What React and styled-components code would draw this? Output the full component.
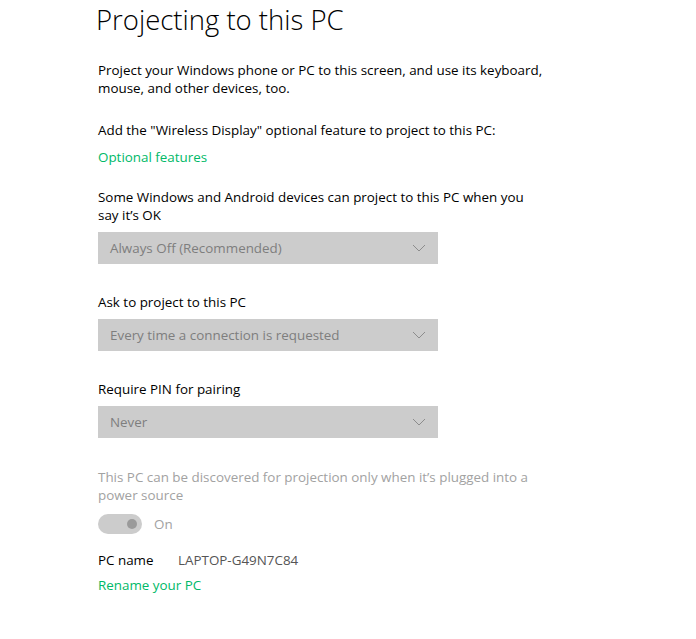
import React from 'react';
import styled, { createGlobalStyle } from 'styled-components';

const GlobalStyle = createGlobalStyle`
  html, body {
    margin: 0;
    padding: 0;
    background: #ffffff;
  }
  body {
    font-family: "Open Sans", "Noto Sans", "Liberation Sans", sans-serif;
    color: #000;
  }
`;

const Page = styled.div`
  width: 696px;
  height: 639px;
  box-sizing: border-box;
  padding-left: 98px;
  display: flex;
  flex-direction: column;
  overflow: hidden;
`;

const Title = styled.h1`
  margin: 0 0 0 -2px;
  font-size: 27.5px;
  font-weight: 300;
  line-height: 40px;
  letter-spacing: 0;
`;

const Text = styled.p`
  margin: ${p => p.$top || 0}px 0 0 0;
  font-size: 13.4px;
  line-height: 18px;
  max-width: ${p => p.$width || 445}px;
  color: ${p => (p.$disabled ? '#a2a2a2' : '#000')};
`;

const Link = styled.a`
  display: block;
  margin-top: ${p => p.$top || 0}px;
  font-size: 13.4px;
  line-height: 18px;
  color: #00b968;
  text-decoration: none;
  cursor: pointer;
`;

const Select = styled.div`
  margin-top: 8px;
  width: 340px;
  height: 32px;
  box-sizing: border-box;
  padding: 0 12px;
  background: #cccccc;
  display: flex;
  align-items: center;
  justify-content: space-between;
  font-size: 13.4px;
  color: #7e7e7e;
`;

const Chevron = () => (
  <svg width="14" height="8" viewBox="0 0 14 8">
    <path d="M1 1 L7 7 L13 1" fill="none" stroke="#8c8c8c" strokeWidth="1" />
  </svg>
);

const ToggleRow = styled.div`
  margin-top: 10px;
  height: 20px;
  display: flex;
  align-items: center;
  gap: 12px;
  font-size: 13.4px;
  color: #a2a2a2;
`;

const Track = styled.div`
  position: relative;
  width: 44px;
  height: 20px;
  border-radius: 10px;
  background: #cccccc;
`;

const Knob = styled.div`
  position: absolute;
  right: 5px;
  top: 5px;
  width: 10px;
  height: 10px;
  border-radius: 50%;
  background: #9a9a9a;
`;

const NameRow = styled.div`
  margin-top: 17px;
  display: flex;
  font-size: 13.4px;
  line-height: 18px;
`;

const NameLabel = styled.span`
  width: 80px;
  color: #000;
`;

const NameValue = styled.span`
  color: #555555;
`;

export default function App() {
  return (
    <>
      <GlobalStyle />
      <Page>
        <Title>Projecting to this PC</Title>
        <Text $top={21} $width={462}>
          Project your Windows phone or PC to this screen, and use its keyboard, mouse, and other devices, too.
        </Text>
        <Text $top={24} $width={462}>Add the "Wireless Display" optional feature to project to this PC:</Text>
        <Link $top={9}>Optional features</Link>
        <Text $top={22}>
          Some Windows and Android devices can project to this PC when you say it’s OK
        </Text>
        <Select>
          <span>Always Off (Recommended)</span>
          <Chevron />
        </Select>
        <Text $top={29}>Ask to project to this PC</Text>
        <Select>
          <span>Every time a connection is requested</span>
          <Chevron />
        </Select>
        <Text $top={29}>Require PIN for pairing</Text>
        <Select>
          <span>Never</span>
          <Chevron />
        </Select>
        <Text $top={30} $disabled>
          This PC can be discovered for projection only when it’s plugged into a power source
        </Text>
        <ToggleRow>
          <Track>
            <Knob />
          </Track>
          <span>On</span>
        </ToggleRow>
        <NameRow>
          <NameLabel>PC name</NameLabel>
          <NameValue>LAPTOP-G49N7C84</NameValue>
        </NameRow>
        <Link $top={7}>Rename your PC</Link>
      </Page>
    </>
  );
}
